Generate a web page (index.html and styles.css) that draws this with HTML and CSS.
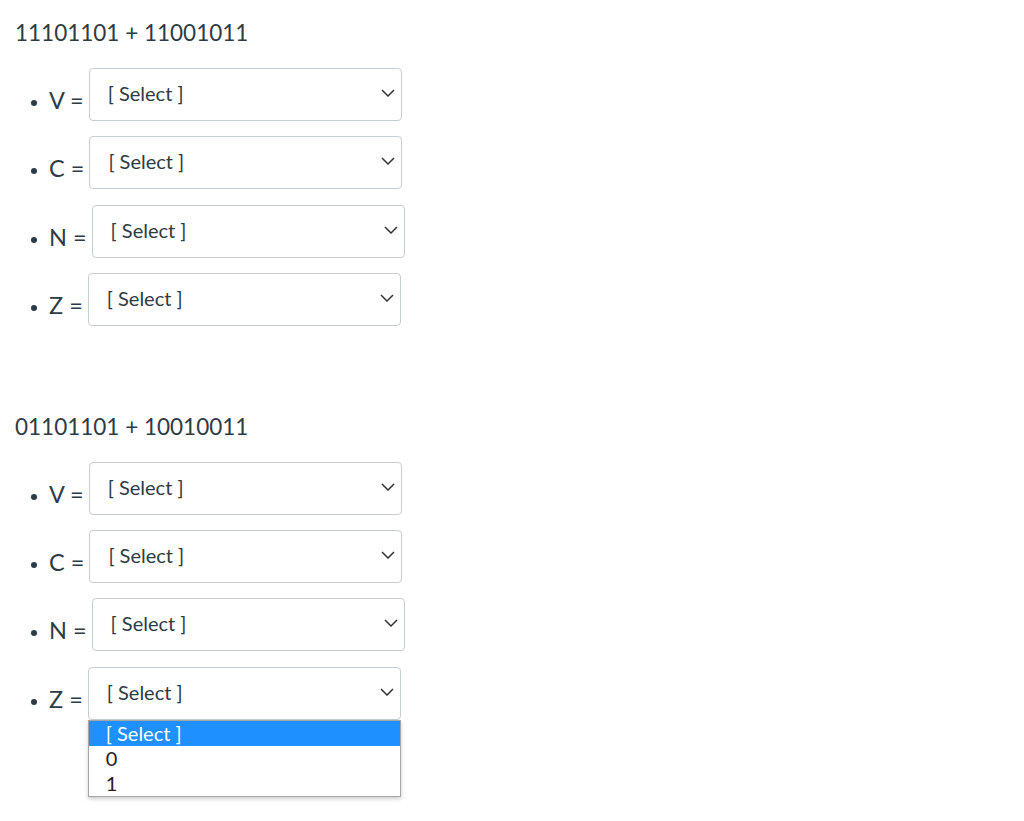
FILE: index.html
```html
<!DOCTYPE html>
<html lang="en">
<head>
    <meta charset="UTF-8">
    <meta name="viewport" content="width=device-width, initial-scale=1.0">
    <title>Overflow flags</title>
    <link rel="stylesheet" href="styles.css">
</head>
<body>
    <div class="quiz">
        <div class="question">
            <p class="question-title">11101101 + 11001011</p>
            <ul class="flags">
                <li>V = <span class="select-wrap"><select><option>[ Select ]</option><option>0</option><option>1</option></select><svg class="chevron" width="14" height="8" viewBox="0 0 14 8"><polyline points="1,1 7,7 13,1" /></svg></span></li>
                <li>C = <span class="select-wrap"><select><option>[ Select ]</option><option>0</option><option>1</option></select><svg class="chevron" width="14" height="8" viewBox="0 0 14 8"><polyline points="1,1 7,7 13,1" /></svg></span></li>
                <li>N = <span class="select-wrap"><select><option>[ Select ]</option><option>0</option><option>1</option></select><svg class="chevron" width="14" height="8" viewBox="0 0 14 8"><polyline points="1,1 7,7 13,1" /></svg></span></li>
                <li>Z = <span class="select-wrap"><select><option>[ Select ]</option><option>0</option><option>1</option></select><svg class="chevron" width="14" height="8" viewBox="0 0 14 8"><polyline points="1,1 7,7 13,1" /></svg></span></li>
            </ul>
        </div>

        <div class="question">
            <p class="question-title">01101101 + 10010011</p>
            <ul class="flags">
                <li>V = <span class="select-wrap"><select><option>[ Select ]</option><option>0</option><option>1</option></select><svg class="chevron" width="14" height="8" viewBox="0 0 14 8"><polyline points="1,1 7,7 13,1" /></svg></span></li>
                <li>C = <span class="select-wrap"><select><option>[ Select ]</option><option>0</option><option>1</option></select><svg class="chevron" width="14" height="8" viewBox="0 0 14 8"><polyline points="1,1 7,7 13,1" /></svg></span></li>
                <li>N = <span class="select-wrap"><select><option>[ Select ]</option><option>0</option><option>1</option></select><svg class="chevron" width="14" height="8" viewBox="0 0 14 8"><polyline points="1,1 7,7 13,1" /></svg></span></li>
                <li>Z = <span class="select-wrap"><select><option>[ Select ]</option><option>0</option><option>1</option></select><svg class="chevron" width="14" height="8" viewBox="0 0 14 8"><polyline points="1,1 7,7 13,1" /></svg>
                        <div class="dropdown">
                            <div class="option selected">[ Select ]</div>
                            <div class="option">0</div>
                            <div class="option">1</div>
                        </div>
                    </span></li>
            </ul>
        </div>
    </div>
</body>
</html>
```

FILE: styles.css
```css
/* General Styles */
body {
    margin: 0;
    font-family: Lato, "Liberation Sans", sans-serif;
    color: #2d3b45;
    background-color: white;
}

.quiz {
    padding: 19px 15px 20px;
}

.question {
    margin-bottom: 81px;
}

.question-title {
    margin: 0;
    font-size: 22.5px;
    line-height: 27px;
}

.flags {
    margin: 28px 0 0;
    padding-left: 34px;
    font-size: 23.5px;
    list-style: none;
}

.flags li {
    margin-bottom: 15.3px;
    line-height: 53px;
}

/* Bullet dot */
.flags li::before {
    content: "";
    display: inline-block;
    width: 6px;
    height: 6px;
    margin-left: -18px;
    margin-right: 12px;
    border-radius: 50%;
    background-color: #2d3b45;
    vertical-align: 3px;
}

/* Select boxes */
.select-wrap {
    position: relative;
    display: inline-block;
    vertical-align: top;
    margin-top: -6px;
    margin-left: -1px;
    line-height: normal;
}

.select-wrap select {
    display: block;
    width: 313px;
    height: 53px;
    padding: 0 30px 3px 18px;
    font-family: Lato, "Liberation Sans", sans-serif;
    font-size: 20px;
    color: #2d3b45;
    background-color: white;
    border: 1px solid #c7cdd1;
    border-radius: 4px;
    appearance: none;
    -webkit-appearance: none;
}

.chevron {
    position: absolute;
    right: 7px;
    top: 21px;
    pointer-events: none;
}

.chevron polyline {
    fill: none;
    stroke: #333;
    stroke-width: 1.5;
}

/* Open dropdown list */
.dropdown {
    position: absolute;
    top: 53px;
    left: 0;
    width: 311px;
    background-color: white;
    border: 1px solid #a6a6a6;
    box-shadow: 0 2px 4px rgba(0, 0, 0, 0.2);
    line-height: 25px;
    font-size: 20px;
    z-index: 10;
}

.option {
    padding-left: 17px;
    color: #222;
}

.option.selected {
    background-color: #1e90ff;
    color: white;
}
```
